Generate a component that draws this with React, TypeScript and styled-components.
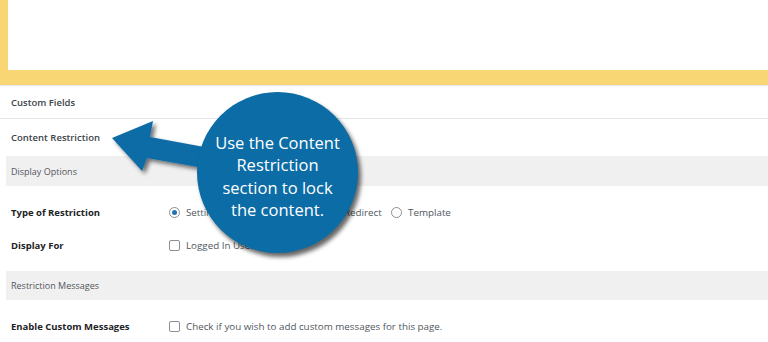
import React from 'react'
import styled, { createGlobalStyle } from 'styled-components'

const GlobalStyle = createGlobalStyle`
  html, body {
    margin: 0;
    padding: 0;
    background: #fff;
  }
  body {
    font-family: "Open Sans", "Noto Sans", sans-serif;
  }
  * {
    box-sizing: border-box;
  }
`

const Page = styled.div`
  position: relative;
  width: 768px;
  height: 342px;
  overflow: hidden;
  background: #fff;
`

const EditorBox = styled.div`
  height: 85px;
  border-left: 8px solid #f9d674;
  border-bottom: 15px solid #f9d674;
  background: #fff;
`

const MetaRow = styled.div<{ $h: number }>`
  height: ${(p) => p.$h}px;
  display: flex;
  align-items: center;
  padding-left: 11px;
  border-top: 1px solid #e6e7e8;
  font-size: 9.5px;
  font-weight: 600;
  color: #3c434a;
`

const Band = styled.div<{ $h: number }>`
  height: ${(p) => p.$h}px;
  margin-left: 6px;
  padding-left: 5px;
  display: flex;
  align-items: center;
  background: #f0f0f0;
  font-size: 9px;
  color: #50575e;
`

const FieldGroup = styled.div<{ $top: number; $bottom: number }>`
  padding: ${(p) => p.$top}px 0 ${(p) => p.$bottom}px 11px;
`

const FieldRow = styled.div`
  height: 33px;
  display: grid;
  grid-template-columns: 158px 1fr;
  align-items: center;
`

const FieldLabel = styled.div`
  font-size: 9.5px;
  font-weight: 700;
  color: #1d2327;
`

const Options = styled.div`
  display: flex;
  align-items: center;
`

const Option = styled.label<{ $w?: number }>`
  display: flex;
  align-items: center;
  gap: 6px;
  width: ${(p) => (p.$w ? `${p.$w}px` : 'auto')};
  font-size: 9.8px;
  color: #50575e;
  white-space: nowrap;
`

const Radio = styled.span<{ $on?: boolean }>`
  width: 11px;
  height: 11px;
  border-radius: 50%;
  border: 1px solid #8c8f94;
  display: flex;
  align-items: center;
  justify-content: center;
  background: #fff;
  &::after {
    content: '';
    width: 5px;
    height: 5px;
    border-radius: 50%;
    background: ${(p) => (p.$on ? '#2271b1' : 'transparent')};
  }
`

const Check = styled.span`
  width: 11px;
  height: 11px;
  border-radius: 2px;
  border: 1px solid #8c8f94;
  background: #fff;
`

const Callout = styled.svg`
  position: absolute;
  left: 0;
  top: 0;
  width: 768px;
  height: 342px;
  pointer-events: none;
`

const Bubble = styled.div`
  position: absolute;
  left: 197px;
  top: 92px;
  width: 161px;
  height: 161px;
  border-radius: 50%;
  background: #0c6ca6;
  box-shadow: 3px 4px 4px rgba(0, 0, 0, 0.6);
  display: flex;
  align-items: center;
  justify-content: center;
  text-align: center;
  color: #fff;
  font-family: "Open Sans", "Noto Sans", sans-serif;
  font-size: 16.5px;
  line-height: 22.3px;
  padding-top: 8px;
`

export default function App() {
  return (
    <Page>
      <GlobalStyle />
      <EditorBox />
      <MetaRow $h={33}>Custom Fields</MetaRow>
      <MetaRow $h={38}>Content Restriction</MetaRow>
      <Band $h={30}>Display Options</Band>
      <FieldGroup $top={10} $bottom={9}>
        <FieldRow>
          <FieldLabel>Type of Restriction</FieldLabel>
          <Options>
            <Option $w={158}>
              <Radio $on />
              Settings
            </Option>
            <Option $w={64}>
              <Radio />
              Redirect
            </Option>
            <Option>
              <Radio />
              Template
            </Option>
          </Options>
        </FieldRow>
        <FieldRow>
          <FieldLabel>Display For</FieldLabel>
          <Options>
            <Option>
              <Check />
              Logged In Users
            </Option>
          </Options>
        </FieldRow>
      </FieldGroup>
      <Band $h={29}>Restriction Messages</Band>
      <FieldGroup $top={10} $bottom={0}>
        <FieldRow>
          <FieldLabel>Enable Custom Messages</FieldLabel>
          <Options>
            <Option>
              <Check />
              Check if you wish to add custom messages for this page.
            </Option>
          </Options>
        </FieldRow>
      </FieldGroup>

      <Callout viewBox="0 0 768 342">
        <defs>
          <filter id="shadow" x="-20%" y="-20%" width="140%" height="140%">
            <feDropShadow dx="3" dy="3" stdDeviation="2" floodColor="#000" floodOpacity="0.55" />
          </filter>
        </defs>
        <polygon
          points="112,138 153,121 150,137 215,149 215,170 147,158 142,171"
          fill="#0c6ca6"
          filter="url(#shadow)"
        />
      </Callout>
      <Bubble>
        Use the Content
        <br />
        Restriction
        <br />
        section to lock
        <br />
        the content.
      </Bubble>
    </Page>
  )
}
